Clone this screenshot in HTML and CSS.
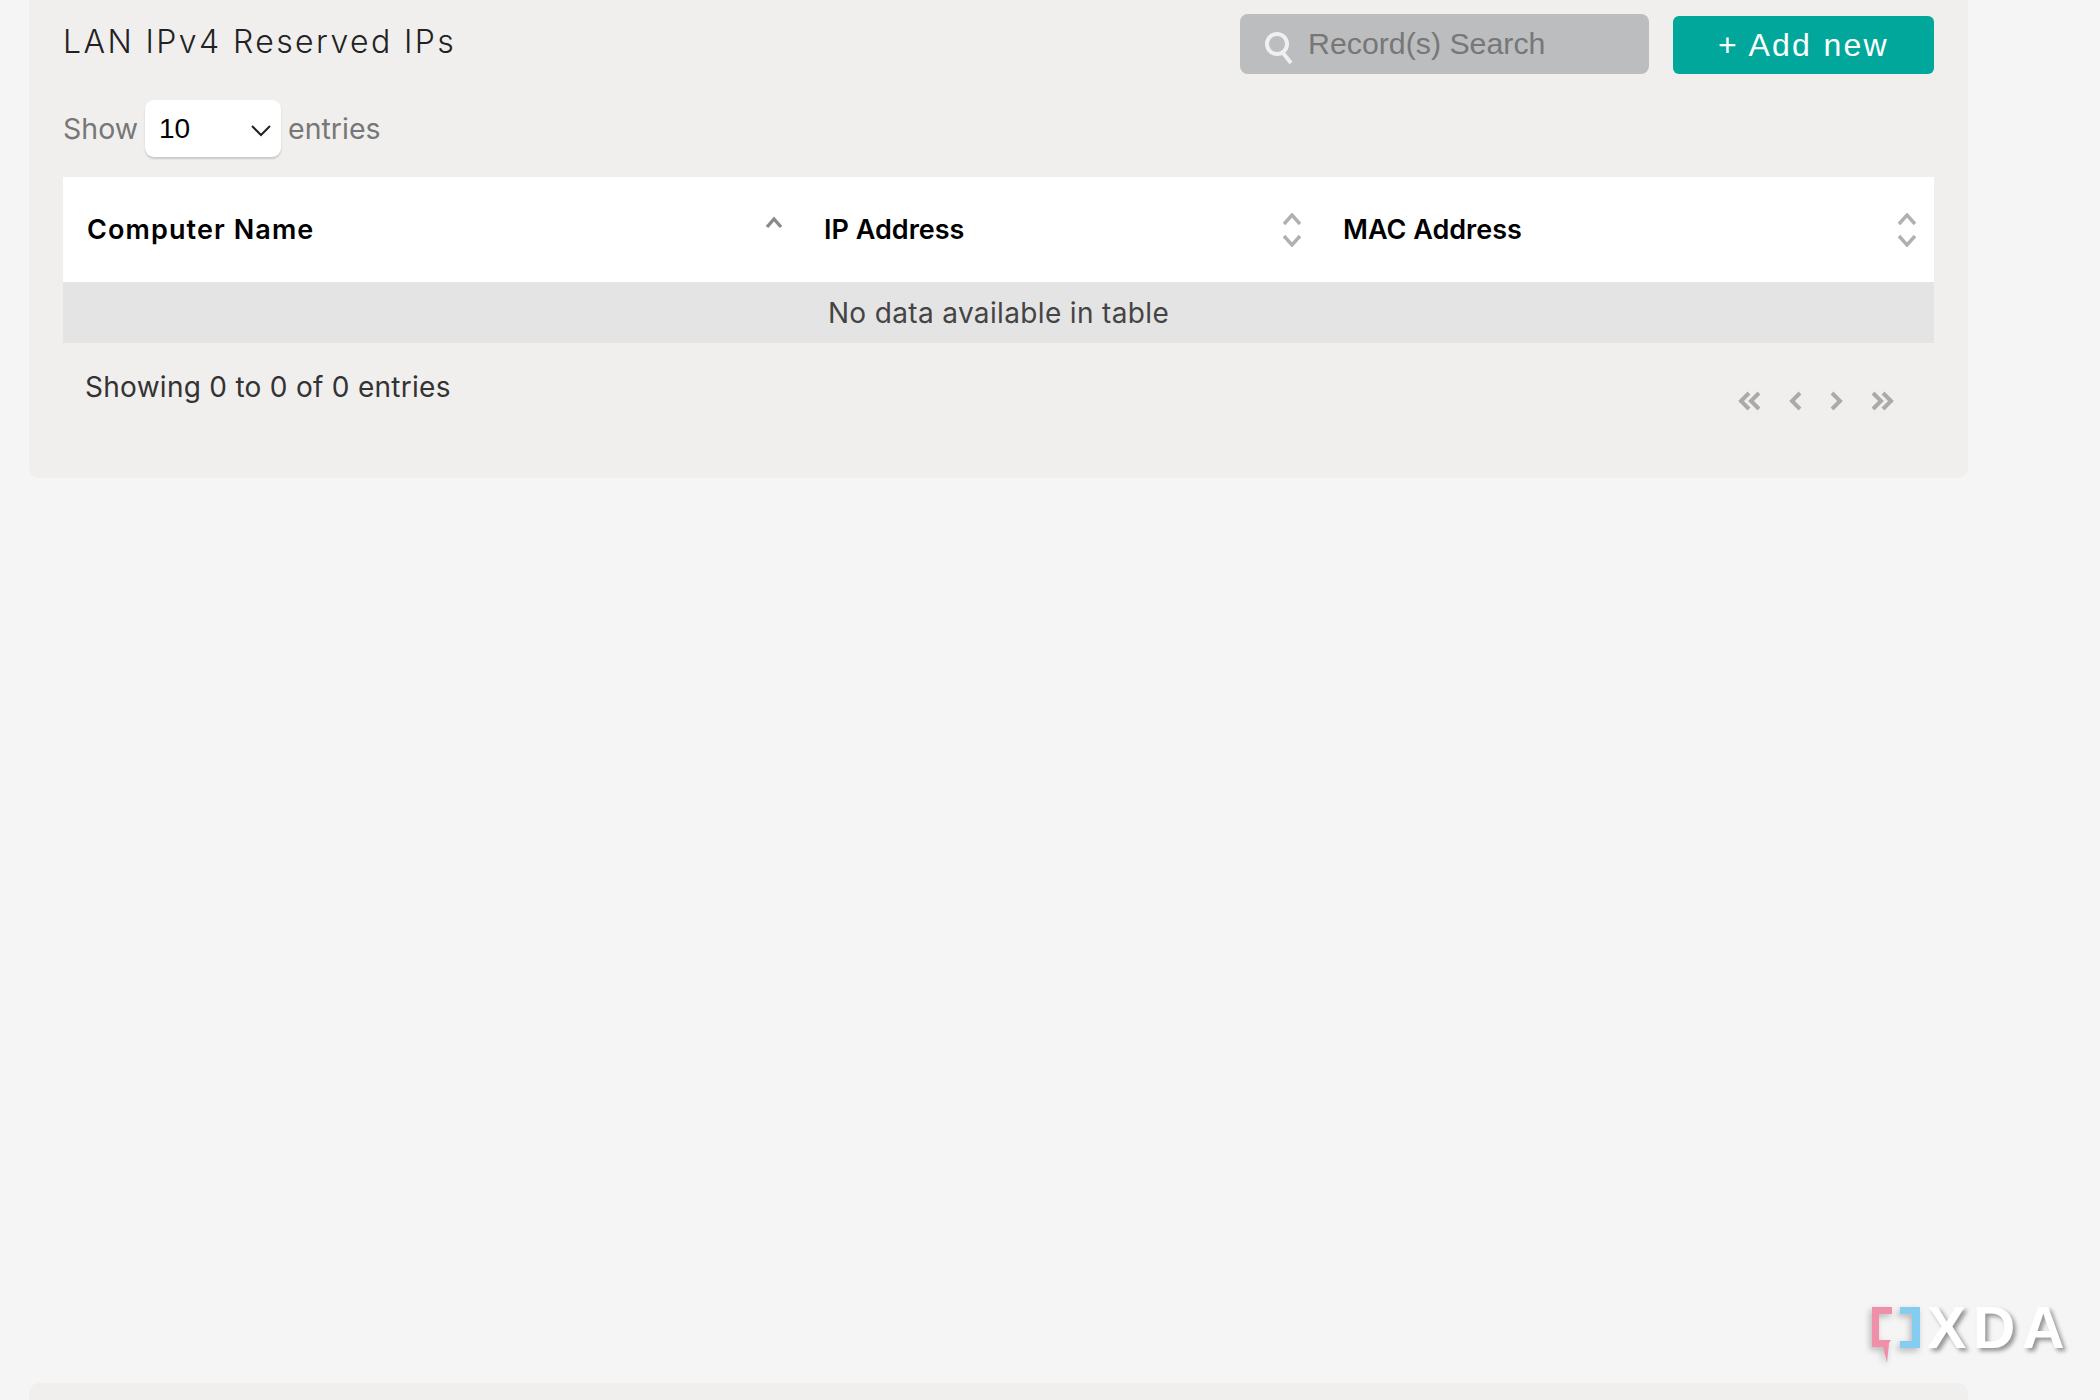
FILE: index.html
```html
<!DOCTYPE html>
<html lang="en">
<head>
<meta charset="utf-8">
<title>LAN IPv4 Reserved IPs</title>
<link rel="stylesheet" href="styles.css">
</head>
<body>
<section class="panel">
  <div class="top-row">
    <h1 class="title">LAN IPv4 Reserved IPs</h1>
    <div class="actions">
      <div class="search">
        <svg class="search-icon" width="30" height="34" viewBox="0 0 30 34"><circle cx="13" cy="14" r="10" fill="none" stroke="#f0f0f0" stroke-width="4"/><path d="M19 23l8 10" fill="none" stroke="#f0f0f0" stroke-width="4"/></svg>
        <span class="search-text">Record(s) Search</span>
      </div>
      <button class="add-btn">+ Add new</button>
    </div>
  </div>
  <div class="length-row">
    <span class="muted">Show</span>
    <div class="select">
      <span>10</span>
      <svg width="22" height="13" viewBox="0 0 22 13"><path d="M2 2l9 9 9-9" fill="none" stroke="#222" stroke-width="2"/></svg>
    </div>
    <span class="muted">entries</span>
  </div>
  <table class="data">
    <thead>
      <tr>
        <th class="col-name"><div class="th-in"><span class="name-label">Computer Name</span>
          <svg class="sort-one" width="18" height="14" viewBox="0 0 18 14"><path d="M2 11l7-8 7 8" fill="none" stroke="#8a8a8a" stroke-width="3.4"/></svg></div></th>
        <th class="col-ip"><div class="th-in"><span>IP Address</span>
          <svg width="20" height="34" viewBox="0 0 20 34"><path d="M2 11l8-9 8 9M2 23l8 9 8-9" fill="none" stroke="#b0b0b0" stroke-width="3.4"/></svg></div></th>
        <th class="col-mac"><div class="th-in"><span>MAC Address</span>
          <svg width="20" height="34" viewBox="0 0 20 34"><path d="M2 11l8-9 8 9M2 23l8 9 8-9" fill="none" stroke="#b0b0b0" stroke-width="3.4"/></svg></div></th>
      </tr>
    </thead>
    <tbody>
      <tr><td colspan="3" class="empty">No data available in table</td></tr>
    </tbody>
  </table>
  <div class="foot">
    <span class="info">Showing 0 to 0 of 0 entries</span>
    <nav class="pager">
      <svg width="23" height="20" viewBox="0 0 23 20"><path d="M11 2l-8 8 8 8M21 2l-8 8 8 8" fill="none" stroke="#aaa" stroke-width="4"/></svg>
      <svg width="13" height="20" viewBox="0 0 13 20"><path d="M11 2l-8 8 8 8" fill="none" stroke="#aaa" stroke-width="4"/></svg>
      <svg width="13" height="20" viewBox="0 0 13 20"><path d="M2 2l8 8-8 8" fill="none" stroke="#aaa" stroke-width="4"/></svg>
      <svg width="23" height="20" viewBox="0 0 23 20"><path d="M2 2l8 8-8 8M12 2l8 8-8 8" fill="none" stroke="#aaa" stroke-width="4"/></svg>
    </nav>
  </div>
</section>
<section class="panel-next"></section>
<div class="xda">
  <svg class="xda-mark" width="50" height="58" viewBox="0 0 50 58"><path d="M1 1h20v7H8v26h12l-2 3-2 20-4-16H1z" fill="#ef8fa8"/><path d="M29 1h20v41H29v-7h12V8H29z" fill="#84cdf0"/></svg>
  <span class="xda-text">XDA</span>
</div>
</body>
</html>
```

FILE: styles.css
```css
* { box-sizing: border-box; }
html, body { margin: 0; height: 100%; }
body {
  background: #f5f5f5;
  font-family: Inter, "Open Sans", sans-serif;
  overflow: hidden;
  position: relative;
}
.panel {
  margin-left: 29px;
  width: 1939px;
  height: 478px;
  padding: 14px 34px 0;
  background: #f0efee;
  border-radius: 0 0 10px 10px;
}
.top-row {
  display: flex;
  justify-content: space-between;
  align-items: flex-start;
  height: 86px;
}
.title {
  margin: 8px 0 0;
  font-size: 32px;
  line-height: 40px;
  font-weight: 300;
  letter-spacing: 2.4px;
  color: #222;
}
.actions { display: flex; gap: 24px; align-items: flex-end; height: 60px; }
.search {
  width: 409px;
  height: 60px;
  background: #bcbdbe;
  border-radius: 8px;
  display: flex;
  align-items: flex-start;
  padding: 14px 0 0 24px;
  gap: 14px;
}
.search-icon { margin-top: 2px; margin-left: 0; }
.search-text {
  font-family: "Liberation Sans", Arial, sans-serif;
  font-size: 30.3px;
  line-height: 31px;
  color: #777;
}
.add-btn {
  width: 261px;
  height: 58px;
  border: 0;
  padding: 0;
  background: #00a79a;
  border-radius: 6px;
  color: #fff;
  font-family: "Liberation Sans", Arial, sans-serif;
  font-size: 32px;
  letter-spacing: 2.3px;
}
.length-row {
  display: flex;
  align-items: center;
  gap: 7px;
  height: 57px;
  font-size: 28.5px;
  font-weight: 400;
}
.muted { color: #777; }
.select {
  width: 136px;
  height: 57px;
  background: #fff;
  border-radius: 9px;
  box-shadow: 0 2px 2px rgba(0, 0, 0, .16);
  display: flex;
  align-items: center;
  justify-content: space-between;
  padding: 0 9px 0 14px;
  font-family: "Liberation Sans", Arial, sans-serif;
  font-size: 28px;
  color: #000;
}
.select svg { margin-top: 4px; }
.data {
  width: 1871px;
  margin-top: 20px;
  border-collapse: collapse;
  table-layout: fixed;
}
.col-name { width: 737px; }
.col-ip { width: 519px; }
.col-mac { width: 615px; }
th {
  height: 105px;
  padding: 0 17px 0 24px;
  background: #fff;
  text-align: left;
  font-size: 27px;
  font-weight: 600;
  color: #000;
}
.th-in { display: flex; justify-content: space-between; align-items: center; }
.name-label { letter-spacing: 1.1px; }
.sort-one { margin-top: -14px; }
.empty {
  height: 61px;
  padding: 0;
  background: #e4e4e4;
  text-align: center;
  font-size: 28px;
  letter-spacing: .35px;
  color: #444;
}
.foot {
  display: flex;
  justify-content: space-between;
  align-items: flex-start;
  padding: 26px 40px 0 22px;
}
.info { font-size: 28px; letter-spacing: .28px; line-height: 36px; color: #333; }
.pager { display: flex; gap: 28px; margin-top: 22px; }
.panel-next {
  margin: 905px 0 0 29px;
  width: 1939px;
  height: 40px;
  background: #f0efee;
  border-radius: 10px 10px 0 0;
}
.xda {
  position: absolute;
  left: 1871px;
  top: 1306px;
  display: flex;
  align-items: flex-start;
  gap: 6px;
}
.xda-mark { filter: drop-shadow(-2px 3px 3px rgba(0, 0, 0, .25)); }
.xda-text {
  font-family: "Liberation Sans", Arial, sans-serif;
  font-weight: 700;
  font-size: 59px;
  line-height: 44px;
  letter-spacing: 6.5px;
  color: #fff;
  text-shadow: 3px 3px 4px rgba(0, 0, 0, .4);
}
```
